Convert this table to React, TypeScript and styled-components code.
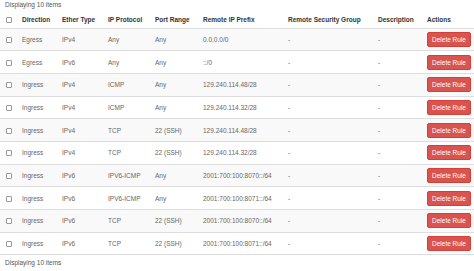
import React from 'react'
import styled, { createGlobalStyle } from 'styled-components'

const GlobalStyle = createGlobalStyle`
  html, body {
    margin: 0;
    padding: 0;
    background: #fff;
  }
  body {
    font-family: 'Liberation Sans', Arial, sans-serif;
    font-size: 6.5px;
    color: #333;
  }
  th, td {
    box-sizing: border-box;
  }
`

const Wrapper = styled.div`
  width: 474px;
  height: 271px;
  overflow: hidden;
`

const Caption = styled.div`
  height: 11px;
  line-height: 10px;
  padding-left: 5px;
  color: #555;
`

const Footer = styled.div`
  height: 16px;
  line-height: 16px;
  padding-left: 5px;
  color: #555;
`

const Table = styled.table`
  width: 474px;
  border-collapse: collapse;
  table-layout: fixed;
`

const HeadCell = styled.th<{ w: number }>`
  width: ${(p) => p.w}px;
  height: 17px;
  padding: 0 4px;
  text-align: left;
  font-weight: bold;
  color: #333;
  border-bottom: 1px solid #ddd;
  white-space: nowrap;
`

const Row = styled.tr<{ striped: boolean }>`
  background: ${(p) => (p.striped ? '#f9f9f9' : '#fff')};
  border-bottom: 1px solid #ddd;
`

const Cell = styled.td`
  height: 22.7px;
  padding: 0 4px;
  color: #666;
  white-space: nowrap;
  vertical-align: middle;
`

const CheckCell = styled.td`
  padding: 0;
  text-align: center;
  vertical-align: middle;
`

const CheckHead = styled.th`
  width: 18px;
  padding: 0;
  text-align: center;
  border-bottom: 1px solid #ddd;
`

const Box = styled.span`
  display: inline-block;
  width: 4px;
  height: 4px;
  border: 1px solid #999;
  border-radius: 1px;
  background: #fff;
  vertical-align: middle;
`

const DeleteButton = styled.button`
  width: 44px;
  height: 15px;
  padding: 0;
  border: 1px solid #d43f3a;
  border-radius: 2px;
  background: #d9534f;
  color: #fff;
  font-family: inherit;
  font-size: 6.5px;
  line-height: 13px;
  cursor: pointer;
`

const columns = [
  { label: 'Direction', w: 40 },
  { label: 'Ether Type', w: 46 },
  { label: 'IP Protocol', w: 47 },
  { label: 'Port Range', w: 48 },
  { label: 'Remote IP Prefix', w: 85 },
  { label: 'Remote Security Group', w: 90 },
  { label: 'Description', w: 49 },
  { label: 'Actions', w: 51 },
]

const rules = [
  ['Egress', 'IPv4', 'Any', 'Any', '0.0.0.0/0'],
  ['Egress', 'IPv6', 'Any', 'Any', '::/0'],
  ['Ingress', 'IPv4', 'ICMP', 'Any', '129.240.114.48/28'],
  ['Ingress', 'IPv4', 'ICMP', 'Any', '129.240.114.32/28'],
  ['Ingress', 'IPv4', 'TCP', '22 (SSH)', '129.240.114.48/28'],
  ['Ingress', 'IPv4', 'TCP', '22 (SSH)', '129.240.114.32/28'],
  ['Ingress', 'IPv6', 'IPV6-ICMP', 'Any', '2001:700:100:8070::/64'],
  ['Ingress', 'IPv6', 'IPV6-ICMP', 'Any', '2001:700:100:8071::/64'],
  ['Ingress', 'IPv6', 'TCP', '22 (SSH)', '2001:700:100:8070::/64'],
  ['Ingress', 'IPv6', 'TCP', '22 (SSH)', '2001:700:100:8071::/64'],
]

export default function App() {
  return (
    <Wrapper>
      <GlobalStyle />
      <Caption>Displaying 10 items</Caption>
      <Table>
        <thead>
          <tr>
            <CheckHead>
              <Box />
            </CheckHead>
            {columns.map((c) => (
              <HeadCell key={c.label} w={c.w}>
                {c.label}
              </HeadCell>
            ))}
          </tr>
        </thead>
        <tbody>
          {rules.map((r, i) => (
            <Row key={i} striped={i % 2 === 0}>
              <CheckCell>
                <Box />
              </CheckCell>
              {r.map((v, j) => (
                <Cell key={j}>{v}</Cell>
              ))}
              <Cell>-</Cell>
              <Cell>-</Cell>
              <Cell>
                <DeleteButton>Delete Rule</DeleteButton>
              </Cell>
            </Row>
          ))}
        </tbody>
      </Table>
      <Footer>Displaying 10 items</Footer>
    </Wrapper>
  )
}
